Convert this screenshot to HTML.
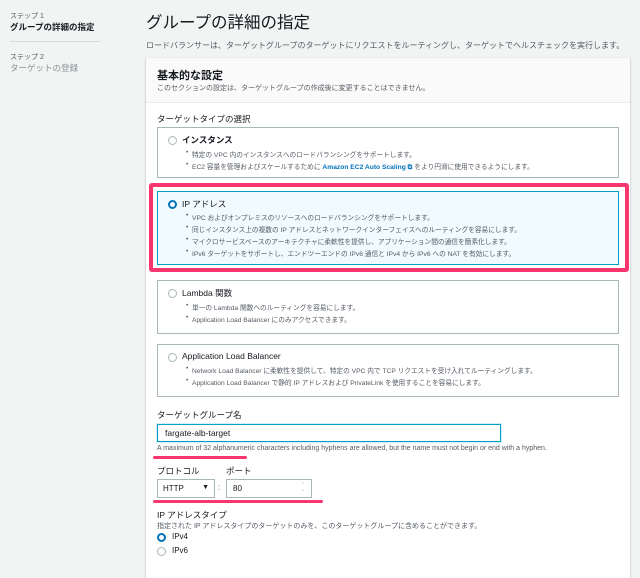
<!DOCTYPE html>
<html><head><meta charset="utf-8"><style>
*{box-sizing:border-box;margin:0;padding:0}
body{width:640px;height:565px;overflow:hidden;background:#f2f3f3;font-family:"Liberation Sans","Noto Sans CJK JP",sans-serif;color:#16191f;position:relative}
.a{position:absolute;white-space:nowrap}
.s{font-size:7px;color:#545b64}
.card{position:absolute;left:157px;width:462px;border:1px solid #aab7b8;background:#fff}
.rad{position:absolute;width:9px;height:9px;border-radius:50%;border:1px solid #aab7b8;background:#fff}
.rad.on{border:2.5px solid #0073bb}
.ct{position:absolute;left:24px;font-size:8.5px;font-weight:bold;color:#16191f;white-space:nowrap}
.li{position:absolute;left:34px;font-size:6.7px;color:#545b64;white-space:nowrap}
.li:before{content:"•";position:absolute;left:-6px}
.lbl{font-size:8.5px;color:#16191f}
.pk{position:absolute;background:#f7356e;border-radius:2px}
</style></head><body>
<div class="a s" style="left:10px;top:11px;font-size:7px">ステップ 1</div>
<div class="a" style="left:10px;top:21px;font-size:8.5px;font-weight:bold">グループの詳細の指定</div>
<div class="a" style="left:10px;top:41px;width:90px;height:1px;background:#d5dbdb"></div>
<div class="a s" style="left:10px;top:52px">ステップ 2</div>
<div class="a" style="left:10px;top:62px;font-size:8.5px;color:#879596">ターゲットの登録</div>

<div class="a" style="left:146px;top:9px;font-size:16.5px;color:#16191f">グループの詳細の指定</div>
<div class="a" style="left:146px;top:40px;font-size:8px;color:#545b64">ロードバランサーは、ターゲットグループのターゲットにリクエストをルーティングし、ターゲットでヘルスチェックを実行します。</div>

<div class="a" style="left:146px;top:58px;width:484px;height:520px;background:#fff;box-shadow:0 1px 2px rgba(0,28,36,.3)"></div>
<div class="a" style="left:146px;top:58px;width:484px;height:45px;background:#fafafa;border-bottom:1px solid #eaeded"></div>
<div class="a" style="left:157px;top:67px;font-size:11px;font-weight:bold">基本的な設定</div>
<div class="a s" style="left:157px;top:83px;font-size:7px">このセクションの設定は、ターゲットグループの作成後に変更することはできません。</div>

<div class="a lbl" style="left:157px;top:113px">ターゲットタイプの選択</div>
<div class="card" style="top:127px;height:51px">
 <div class="rad" style="left:10px;top:8px"></div>
 <div class="ct" style="top:6px">インスタンス</div>
 <div class="li" style="top:21px">特定の VPC 内のインスタンスへのロードバランシングをサポートします。</div>
 <div class="li" style="top:33px">EC2 容量を管理およびスケールするために <b style="color:#0073bb">Amazon EC2 Auto Scaling ⧉</b> をより円滑に使用できるようにします。</div>
</div>
<div class="a" style="left:149px;top:183px;width:480px;height:89px;border:4px solid #f7356e;border-radius:3px"></div>
<div class="card" style="top:191px;height:74px;border-color:#00a1c9;background:#f1faff">
 <div class="rad on" style="left:10px;top:8px"></div>
 <div class="ct" style="top:6px;font-weight:normal">IP アドレス</div>
 <div class="li" style="top:20px">VPC およびオンプレミスのリソースへのロードバランシングをサポートします。</div>
 <div class="li" style="top:32px">同じインスタンス上の複数の IP アドレスとネットワークインターフェイスへのルーティングを容易にします。</div>
 <div class="li" style="top:44px">マイクロサービスベースのアーキテクチャに柔軟性を提供し、アプリケーション間の通信を簡素化します。</div>
 <div class="li" style="top:56px">IPv6 ターゲットをサポートし、エンドツーエンドの IPv6 通信と IPv4 から IPv6 への NAT を有効にします。</div>
</div>
<div class="card" style="top:280px;height:54px">
 <div class="rad" style="left:10px;top:8px"></div>
 <div class="ct" style="top:6px;font-weight:normal">Lambda 関数</div>
 <div class="li" style="top:21px">単一の Lambda 関数へのルーティングを容易にします。</div>
 <div class="li" style="top:33px">Application Load Balancer にのみアクセスできます。</div>
</div>
<div class="card" style="top:344px;height:53px">
 <div class="rad" style="left:10px;top:8px"></div>
 <div class="ct" style="top:6px;font-weight:normal">Application Load Balancer</div>
 <div class="li" style="top:20px">Network Load Balancer に柔軟性を提供して、特定の VPC 内で TCP リクエストを受け入れてルーティングします。</div>
 <div class="li" style="top:32px">Application Load Balancer で静的 IP アドレスおよび PrivateLink を使用することを容易にします。</div>
</div>

<div class="a lbl" style="left:157px;top:409px">ターゲットグループ名</div>
<div class="a" style="left:157px;top:424px;width:344px;height:18px;border:1px solid #00a1c9;box-shadow:0 0 0 1px #d4eef7;background:#fff;font-size:8.5px;padding:3px 0 0 7px">fargate-alb-target</div>
<div class="a" style="left:157px;top:445px;font-size:7px;color:#545b64">A maximum of 32 alphanumeric characters including hyphens are allowed, but the name must not begin or end with a hyphen.</div>
<div class="pk" style="left:153px;top:456px;width:94px;height:3px"></div>
<div class="a lbl" style="left:157px;top:465px">プロトコル</div>
<div class="a lbl" style="left:226px;top:465px">ポート</div>
<div class="a" style="left:157px;top:479px;width:58px;height:19px;border:1px solid #aab7b8;background:#fff;font-size:8px;padding:4px 0 0 5px">HTTP<span style="position:absolute;right:5px;top:4px;font-size:7px">▼</span></div>
<div class="a" style="left:218px;top:483px;font-size:8px;color:#545b64">:</div>
<div class="a" style="left:226px;top:479px;width:86px;height:19px;border:1px solid #aab7b8;background:#fff;font-size:8px;padding:4px 0 0 6px">80<span style="position:absolute;right:6px;top:3px;font-size:5px;color:#aab7b8;line-height:5px">⌃<br>⌄</span></div>
<div class="pk" style="left:153px;top:500px;width:170px;height:3px"></div>
<div class="a lbl" style="left:157px;top:509px">IP アドレスタイプ</div>
<div class="a" style="left:157px;top:521px;font-size:7px;color:#545b64">指定された IP アドレスタイプのターゲットのみを、このターゲットグループに含めることができます。</div>
<div class="rad on" style="left:157px;top:533px"></div>
<div class="a" style="left:172px;top:532px;font-size:8px">IPv4</div>
<div class="rad" style="left:157px;top:547px"></div>
<div class="a" style="left:172px;top:546px;font-size:8px">IPv6</div>
</body></html>
